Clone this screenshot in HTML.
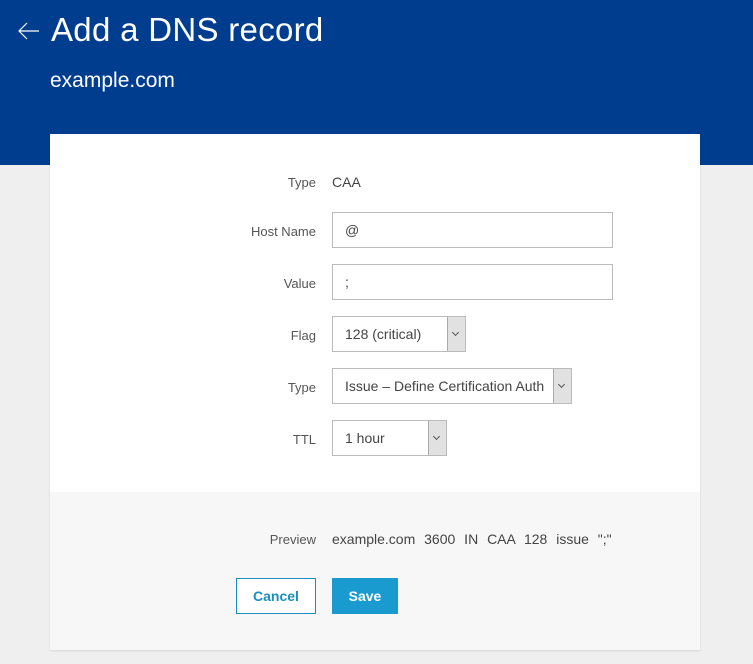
<!DOCTYPE html>
<html><head><style>
body{margin:0;width:753px;height:664px;background:#efefef;font-family:"Liberation Sans",sans-serif;position:relative;overflow:hidden}
.hdr{position:absolute;left:0;top:0;width:753px;height:165px;background:#003d8f}
.t{position:absolute;color:#fff}
.card{position:absolute;left:50px;top:134px;width:650px;height:516px;background:#f7f7f7;box-shadow:0 1px 2px rgba(0,0,0,.1)}
.white{position:absolute;left:0;top:0;width:650px;height:358px;background:#fff}
.lbl{position:absolute;right:384px;font-size:13px;color:#555;text-align:right}
.val{position:absolute;font-size:14px;color:#444}
.inp{position:absolute;left:282px;width:281px;height:36px;border:1px solid #bbb;box-sizing:border-box;background:#fff;font-size:14px;color:#444;padding:9px 12px}
.sel{position:absolute;left:282px;height:36px;border:1px solid #bbb;box-sizing:border-box;background:#fff;font-size:14px;color:#444;padding:9px 12px;white-space:nowrap;overflow:hidden}
.arr{position:absolute;right:0;top:0;width:17px;height:34px;background:#e1e1e1;border-left:1px solid #aaa}
.arr:after{content:"";position:absolute;left:5px;top:13px;width:4px;height:4px;border-right:1px solid #555;border-bottom:1px solid #555;transform:rotate(45deg)}
.btn{position:absolute;top:444px;height:36px;box-sizing:border-box;font-size:14px;font-weight:bold;text-align:center;line-height:36px}
</style></head><body>
<div class="hdr"></div>
<svg style="position:absolute;left:17px;top:21px" width="24" height="20"><path d="M22 10H2M10 2L2 10l8 8" stroke="#fff" stroke-width="1.2" fill="none"/></svg>
<div class="t" style="left:51px;top:11px;font-size:33px;letter-spacing:0.3px">Add a DNS record</div>
<div class="t" style="left:50px;top:69px;font-size:21px">example.com</div>
<div class="card">
<div class="white"></div>
<div class="lbl" style="top:41px">Type</div><div class="val" style="left:282px;top:40px">CAA</div>
<div class="lbl" style="top:90px">Host Name</div><div class="inp" style="top:78px">@</div>
<div class="lbl" style="top:142px">Value</div><div class="inp" style="top:130px">;</div>
<div class="lbl" style="top:194px">Flag</div><div class="sel" style="top:182px;width:134px">128 (critical)<div class="arr"></div></div>
<div class="lbl" style="top:246px">Type</div><div class="sel" style="top:234px;width:240px;padding-right:22px">Issue – Define Certification Auth<div class="arr"></div></div>
<div class="lbl" style="top:298px">TTL</div><div class="sel" style="top:286px;width:115px">1 hour<div class="arr"></div></div>
<div class="lbl" style="top:398px">Preview</div><div class="val" style="left:282px;top:397px;word-spacing:5px">example.com 3600 IN CAA 128 issue ";"</div>
<div class="btn" style="left:186px;width:80px;border:1px solid #1a8fbf;color:#1a8fbf;background:#fff;line-height:34px">Cancel</div>
<div class="btn" style="left:282px;width:66px;background:#1a9bd0;color:#fff">Save</div>
</div>
</body></html>
